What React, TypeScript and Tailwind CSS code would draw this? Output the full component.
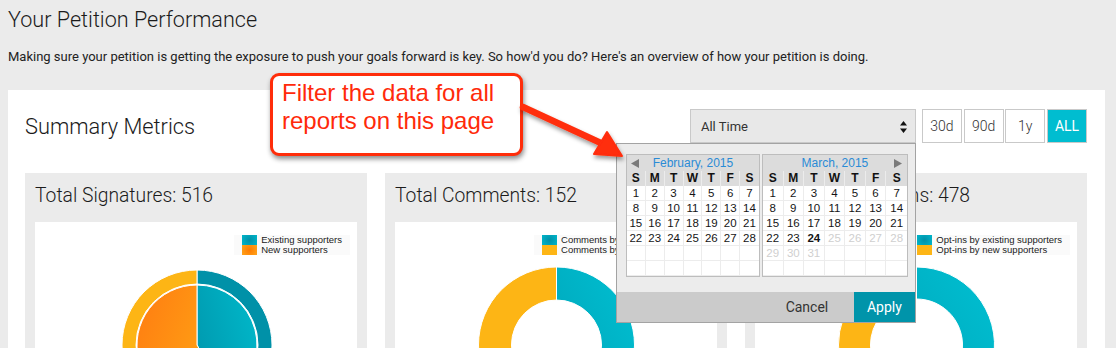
import React from 'react';

type Slice = { from: number; to: number; fill: string };

const pt = (cx: number, cy: number, r: number, a: number) => [
  cx + r * Math.sin((a * Math.PI) / 180),
  cy - r * Math.cos((a * Math.PI) / 180),
];

function arc(cx: number, cy: number, r0: number, r1: number, a0: number, a1: number) {
  const large = a1 - a0 > 180 ? 1 : 0;
  const [x1, y1] = pt(cx, cy, r1, a0);
  const [x2, y2] = pt(cx, cy, r1, a1);
  if (r0 === 0) {
    return `M ${cx} ${cy} L ${x1} ${y1} A ${r1} ${r1} 0 ${large} 1 ${x2} ${y2} Z`;
  }
  const [x3, y3] = pt(cx, cy, r0, a1);
  const [x4, y4] = pt(cx, cy, r0, a0);
  return `M ${x1} ${y1} A ${r1} ${r1} 0 ${large} 1 ${x2} ${y2} L ${x3} ${y3} A ${r0} ${r0} 0 ${large} 0 ${x4} ${y4} Z`;
}

function Defs() {
  return (
    <defs>
      <linearGradient id="teal" x1="1" y1="0" x2="0" y2="1">
        <stop offset="0" stopColor="#00c0d2" />
        <stop offset="1" stopColor="#00a2b7" />
      </linearGradient>
      <linearGradient id="tealInner" x1="1" y1="0.3" x2="0" y2="0.8">
        <stop offset="0" stopColor="#00b6c8" />
        <stop offset="1" stopColor="#0098ae" />
      </linearGradient>
      <linearGradient id="orange" x1="0" y1="0.4" x2="1" y2="0.9">
        <stop offset="0" stopColor="#ff8212" />
        <stop offset="1" stopColor="#ffab14" />
      </linearGradient>
    </defs>
  );
}

function Ring({ cx, cy, r0, r1, slices }: { cx: number; cy: number; r0: number; r1: number; slices: Slice[] }) {
  return (
    <g>
      {slices.map((s, i) => (
        <path key={i} d={arc(cx, cy, r0, r1, s.from, s.to)} fill={s.fill} stroke="#ffffff" strokeWidth={1} />
      ))}
    </g>
  );
}

function Legend({ items }: { items: { label: string; swatch: string }[] }) {
  return (
    <div className="flex justify-end pr-[7px]">
      <div className="flex flex-col bg-[#fafafa] px-[8px] font-['Liberation_Sans',Arial,sans-serif] text-[9.5px] leading-[10px] text-[#1a1a1a]">
        {items.map((it) => (
          <div key={it.label} className="flex items-center gap-[4px] whitespace-nowrap">
            <span className={`h-[10px] w-[15px] ${it.swatch}`} />
            <span>{it.label}</span>
          </div>
        ))}
      </div>
    </div>
  );
}

const TEAL_SW = 'bg-[radial-gradient(circle,#0090a8_0%,#00b6ca_100%)]';
const ORANGE_SW = 'bg-[radial-gradient(circle,#ff7a00_0%,#ffa41a_100%)]';
const YELLOW_SW = 'bg-[#fdb515]';

function MetricCard({
  title,
  legend,
  chart,
}: {
  title: string;
  legend: { label: string; swatch: string }[];
  chart: React.ReactNode;
}) {
  return (
    <div className="w-[342px] bg-[#ebebeb] px-[10px] pt-[11px]">
      <h3 className="mb-[14px] text-[19.3px] font-light leading-[24px] text-[#1b1b1b]">{title}</h3>
      <div className="h-[200px] bg-white pt-[13px]">
        <Legend items={legend} />
        <svg width={322} height={130} className="mt-[3px] block">
          <Defs />
          {chart}
        </svg>
      </div>
    </div>
  );
}

type Day = { n: number; muted?: boolean; bold?: boolean };

function Calendar({
  month,
  width,
  weeks,
  prev,
  next,
}: {
  month: string;
  width: string;
  weeks: (Day | null)[][];
  prev?: boolean;
  next?: boolean;
}) {
  const names = ['S', 'M', 'T', 'W', 'T', 'F', 'S'];
  return (
    <div className={`${width} border border-[#bdbdbd] bg-white font-['Liberation_Sans',Arial,sans-serif]`}>
      <div className="relative flex h-[16px] items-center justify-center bg-[#dcdcdc] text-[12px] text-[#2a8bd6]">
        {prev && (
          <svg width="8" height="9" viewBox="0 0 8 9" className="absolute left-[4px] top-[4px]">
            <path d="M8 0 L0 4.5 L8 9 Z" fill="#7a7a7a" />
          </svg>
        )}
        {month}
        {next && (
          <svg width="8" height="9" viewBox="0 0 8 9" className="absolute right-[5px] top-[4px]">
            <path d="M0 0 L8 4.5 L0 9 Z" fill="#7a7a7a" />
          </svg>
        )}
      </div>
      <div className="grid grid-cols-7 bg-[#dcdcdc]">
        {names.map((d, i) => (
          <div
            key={i}
            className="h-[15px] border-r border-[#ececec] text-center text-[12px] font-bold leading-[15px] text-[#111] last:border-r-0"
          >
            {d}
          </div>
        ))}
      </div>
      {weeks.map((w, wi) => (
        <div key={wi} className="grid grid-cols-7">
          {w.map((d, di) => (
            <div
              key={di}
              className={`h-[15px] border-b border-r border-[#ececec] text-center text-[11.5px] leading-[15px] last:border-r-0 ${
                d?.muted ? 'text-[#cfcfcf]' : 'text-[#151515]'
              } ${d?.bold ? 'font-bold' : ''}`}
            >
              {d ? d.n : ''}
            </div>
          ))}
        </div>
      ))}
    </div>
  );
}

function monthWeeks(days: number, today?: number): (Day | null)[][] {
  const weeks: (Day | null)[][] = [];
  for (let w = 0; w < 6; w++) {
    const row: (Day | null)[] = [];
    for (let d = 0; d < 7; d++) {
      const n = w * 7 + d + 1;
      if (n > days) row.push(null);
      else row.push({ n, bold: today === n, muted: today !== undefined && n > today });
    }
    weeks.push(row);
  }
  return weeks;
}

function DateRangePopover() {
  return (
    <div className="absolute right-0 top-full z-20 w-[300px] border border-[#a3a3a3] bg-[#ececec]">
      <div className="flex gap-[2px] pl-[9px] pt-[10px]">
        <Calendar month="February, 2015" width="w-[134px]" weeks={monthWeeks(28)} prev />
        <Calendar month="March, 2015" width="w-[146px]" weeks={monthWeeks(31, 24)} next />
      </div>
      <div className="mt-[15px] flex h-[30px] justify-end bg-[#cbcbcb] text-[14px]">
        <button className="w-[94px] text-center text-[#333]">Cancel</button>
        <button className="w-[61px] bg-[#0094aa] text-center text-white">Apply</button>
      </div>
    </div>
  );
}

export default function App() {
  const ranges = ['30d', '90d', '1y', 'ALL'];

  return (
    <div className="relative h-[348px] w-[1116px] overflow-hidden bg-[#ebebeb] px-2 font-['Roboto',sans-serif] text-[#222]">
      <h1 className="pt-[7px] text-[21.6px] font-light leading-[26px] text-[#1b1b1b]">Your Petition Performance</h1>
      <p className="mt-[15px] text-[13px] leading-[18px] text-[#222]">
        Making sure your petition is getting the exposure to push your goals forward is key. So how'd you do? Here's an overview of how your petition is doing.
      </p>

      <div className="mt-[24px] w-[1097px] bg-white pl-[17px] pr-[18px] pt-[18px]">
        <div className="flex items-center justify-between">
          <h2 className="pt-[2px] text-[21.8px] font-light leading-[34px] text-[#1b1b1b]">Summary Metrics</h2>
          <div className="flex items-center">
            <div className="relative">
              <div className="flex h-[34px] w-[226px] items-center justify-between border border-[#c9c9c9] bg-[#e8e8e8] pl-[10px] pr-[8px] pt-[2px] text-[13px] text-[#333]">
                <span>All Time</span>
                <svg width="7" height="12" viewBox="0 0 7 12">
                  <path d="M3.5 0 L7 4.5 L0 4.5 Z M0 7.5 L7 7.5 L3.5 12 Z" fill="#111" />
                </svg>
              </div>
              <DateRangePopover />
            </div>
            <div className="ml-[6px] flex gap-[1.7px]">
              {ranges.map((r) => (
                <button
                  key={r}
                  className={`h-[34px] w-[40px] border text-[14px] font-light ${
                    r === 'ALL'
                      ? 'border-[#c9c9c9] bg-[#00bdd0] font-normal text-white'
                      : 'border-[#c9c9c9] bg-white text-[#333]'
                  }`}
                >
                  {r}
                </button>
              ))}
            </div>
          </div>
        </div>

        <div className="mt-[29px] flex gap-[18px]">
          <MetricCard
            title="Total Signatures: 516"
            legend={[
              { label: 'Existing supporters', swatch: TEAL_SW },
              { label: 'New supporters', swatch: ORANGE_SW },
            ]}
            chart={
              <>
                <Ring
                  cx={162}
                  cy={87}
                  r0={61}
                  r1={75}
                  slices={[
                    { from: 0, to: 180, fill: '#0091a8' },
                    { from: 180, to: 360, fill: '#fdb515' },
                  ]}
                />
                <Ring
                  cx={162}
                  cy={87}
                  r0={0}
                  r1={60}
                  slices={[
                    { from: 0, to: 150, fill: 'url(#tealInner)' },
                    { from: 150, to: 360, fill: 'url(#orange)' },
                  ]}
                />
              </>
            }
          />
          <MetricCard
            title="Total Comments: 152"
            legend={[
              { label: 'Comments by existing supporters', swatch: TEAL_SW },
              { label: 'Comments by new supporters', swatch: YELLOW_SW },
            ]}
            chart={
              <Ring
                cx={161.5}
                cy={87}
                r0={45}
                r1={78}
                slices={[
                  { from: 0, to: 180, fill: 'url(#teal)' },
                  { from: 180, to: 360, fill: '#fdb515' },
                ]}
              />
            }
          />
          <MetricCard
            title="Total Partner Opt-ins: 478"
            legend={[
              { label: 'Opt-ins by existing supporters', swatch: TEAL_SW },
              { label: 'Opt-ins by new supporters', swatch: YELLOW_SW },
            ]}
            chart={
              <Ring
                cx={161.5}
                cy={87}
                r0={46}
                r1={78}
                slices={[
                  { from: 0, to: 200, fill: 'url(#teal)' },
                  { from: 200, to: 360, fill: '#fdb515' },
                ]}
              />
            }
          />
        </div>
      </div>

      {/* annotation callout */}
      <div className="absolute left-[270px] top-[73px] z-30 h-[83px] w-[253px] rounded-[9px] border-[3px] border-[#ff2d0a] bg-white pl-[9px] pt-[3px] font-['Liberation_Sans',Arial,sans-serif] text-[24px] leading-[28px] text-[#ff2a0a] shadow-[1px_3px_5px_rgba(0,0,0,0.45)]">
        Filter the data for all
        <br />
        reports on this page
      </div>
      <svg width="130" height="80" viewBox="0 0 130 80" className="absolute left-[515px] top-[95px] z-30">
        <defs>
          <filter id="arrowShadow" x="-20%" y="-20%" width="140%" height="160%">
            <feDropShadow dx="1" dy="3" stdDeviation="2" floodColor="#000" floodOpacity="0.4" />
          </filter>
        </defs>
        <g filter="url(#arrowShadow)">
          <path d="M8 12 L88 49" stroke="#ff2d0a" strokeWidth="6.5" strokeLinecap="round" />
          <path d="M107 61 L79 59 L92 37 Z" fill="#ff2d0a" stroke="#ff2d0a" strokeWidth="2" strokeLinejoin="round" />
        </g>
      </svg>
    </div>
  );
}
